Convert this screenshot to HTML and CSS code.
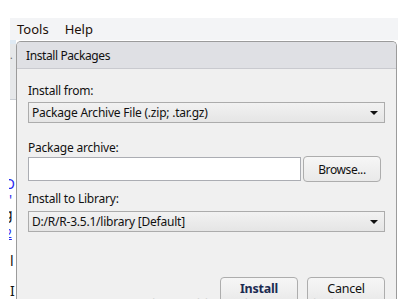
FILE: index.html
```html
<!DOCTYPE html>
<html>
<head>
<meta charset="utf-8">
<link rel="stylesheet" href="styles.css">
</head>
<body>
<div class="screen">
  <div class="topgap"></div>
  <div class="menubar">
    <span class="menu-item">Tools</span>
    <span class="menu-item">Help</span>
  </div>
  <div class="workspace">
    <div class="gutter">
      <div class="gutter-panel">
        <div class="gutter-strip"></div>
        <div class="gutter-box"><span class="dot">.</span></div>
      </div>
      <div class="gutter-text">
        <div class="frag blue g1">O</div>
        <div class="frag blue g2">'</div>
        <div class="frag g3">g</div>
        <div class="frag blue link g4">2</div>
        <div class="frag g5">l</div>
        <div class="frag g6">I</div>
      </div>
    </div>
    <div class="dialog">
      <div class="titlebar">Install Packages</div>
      <div class="dialog-body">
        <div class="field first">
          <div class="label">Install from:</div>
          <div class="select">
            <span>Package Archive File (.zip; .tar.gz)</span>
            <span class="arrow"></span>
          </div>
        </div>
        <div class="field second">
          <div class="label">Package archive:</div>
          <div class="file-row">
            <div class="text-input"></div>
            <div class="button browse">Browse...</div>
          </div>
        </div>
        <div class="field third">
          <div class="label">Install to Library:</div>
          <div class="select">
            <span>D:/R/R-3.5.1/library [Default]</span>
            <span class="arrow"></span>
          </div>
        </div>
        <div class="actions">
          <div class="button action default">Install</div>
          <div class="button action">Cancel</div>
        </div>
        <div class="watermark">https://blog.csdn.net/qq_xiaxiu2c95</div>
      </div>
    </div>
  </div>
</div>
</body>
</html>
```

FILE: styles.css
```css
* { box-sizing: border-box; }
html, body { margin: 0; padding: 0; background: #ffffff; }
body {
  font-family: "Noto Sans", "Noto Sans CJK SC", sans-serif;
  color: #1a1a1a;
  width: 398px;
  height: 299px;
  overflow: hidden;
}
.screen {
  display: flex;
  flex-direction: column;
  height: 299px;
}
.topgap { height: 18px; flex: none; }
.menubar {
  flex: none;
  height: 22px;
  margin-left: 10px;
  background: #f3f4f6;
  display: flex;
  align-items: center;
  gap: 16px;
  padding-left: 7px;
  font-size: 13px;
  color: #1c1008;
}
.menu-item { line-height: 22px; }
.workspace {
  flex: 1;
  display: flex;
  min-height: 0;
}
.gutter {
  width: 16px;
  flex: none;
  display: flex;
  flex-direction: column;
}
.gutter-panel {
  margin-left: 10px;
  height: 60px;
  display: flex;
  flex-direction: column;
}
.gutter-strip { height: 4px; background: #dfeaf4; }
.gutter-box {
  flex: 1;
  background: #e6e8ea;
  border-bottom: 1px solid #c9ced4;
}
.dot { font-size: 10px; color: #666; display: block; line-height: 10px; padding-top: 6px; }
.gutter-text {
  flex: 1;
  margin-left: 9px;
  width: 6px;
  overflow: hidden;
  font-size: 14px;
  line-height: 16px;
  padding-top: 76px;
}
.frag { height: 16px; color: #111; white-space: nowrap; }
.g1 { margin-left: -5px; }
.g2 { margin-left: 0px; height: 14px; }
.g3 { margin-left: -5px; height: 20px; }
.g4 { margin-left: -4px; height: 27px; }
.g5 { margin-left: 1px; height: 30px; }
.g6 { margin-left: 1px; }
.blue { color: #2a2af0; }
.link { text-decoration: underline; font-size: 12px; }
.dialog {
  flex: 1;
  margin-top: 1px;
  margin-right: 1px;
  border: 1px solid #9b9b9b;
  border-bottom: none;
  border-radius: 5px 5px 0 0;
  display: flex;
  flex-direction: column;
  background: #f0f0f0;
  overflow: hidden;
}
.titlebar {
  flex: none;
  height: 27px;
  background: #dfe0e4;
  border-bottom: 1px solid #c9cacf;
  font-size: 12px;
  letter-spacing: -0.4px;
  line-height: 22px;
  padding-top: 3px;
  padding-left: 9px;
  color: #111;
}
.dialog-body {
  flex: 1;
  padding: 0 11px 0 11px;
  display: flex;
  flex-direction: column;
  position: relative;
  font-size: 12px;
  letter-spacing: -0.22px;
}
.label {
  line-height: 16px;
  color: #111;
}
.field.first { padding-top: 14px; }
.field.first .label { margin-bottom: 3px; }
.field.second { padding-top: 17px; }
.field.second .label { margin-bottom: 0; }
.field.third { padding-top: 9px; }
.field.third .label { margin-bottom: 4px; }
.select {
  height: 21px;
  border: 1px solid #acacac;
  background: linear-gradient(#f2f2f2, #e5e5e5);
  display: flex;
  align-items: center;
  justify-content: space-between;
  padding: 0 6px 0 3px;
  color: #111;
}
.arrow {
  width: 0;
  height: 0;
  border-left: 4px solid transparent;
  border-right: 4px solid transparent;
  border-top: 4px solid #111;
}
.file-row {
  display: flex;
  align-items: center;
  gap: 2px;
}
.text-input {
  width: 273px;
  height: 24px;
  background: #ffffff;
  border: 1px solid #abadb3;
}
.button {
  border: 1px solid #adadad;
  border-radius: 4px;
  background: linear-gradient(#f6f6f6, #e9e9e9);
  display: flex;
  align-items: center;
  justify-content: center;
  color: #111;
}
.browse { width: 78px; height: 26px; letter-spacing: -0.4px; }
.actions {
  margin-top: 45px;
  display: flex;
  justify-content: flex-end;
  gap: 9px;
}
.action {
  width: 78px;
  height: 26px;
  align-items: flex-start;
  padding-top: 3px;
  line-height: 16px;
  font-size: 12.5px;
}
.default { font-weight: bold; color: #1b2b52; }
.watermark {
  position: absolute;
  left: 135px;
  bottom: -8px;
  font-size: 13px;
  line-height: 16px;
  letter-spacing: 0;
  color: rgba(190, 190, 190, 0.55);
  white-space: nowrap;
}
```
